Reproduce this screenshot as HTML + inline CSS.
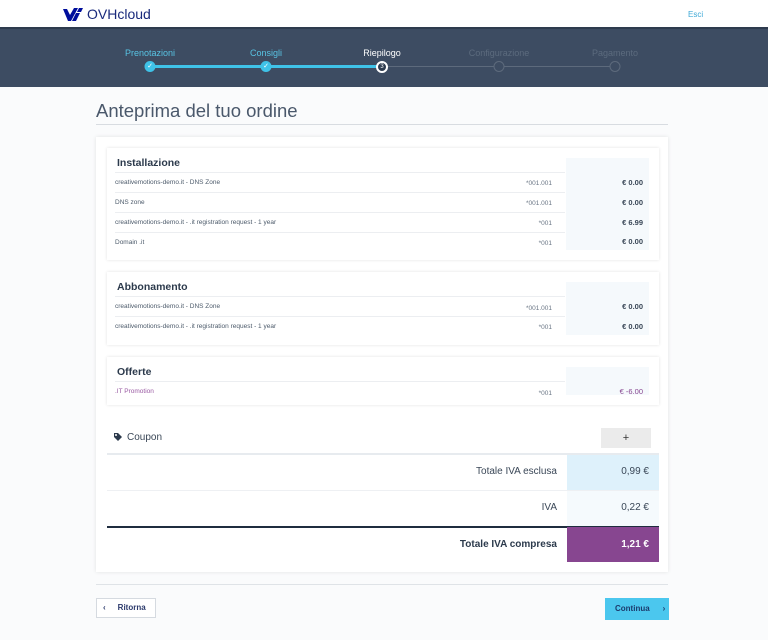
<!DOCTYPE html>
<html><head><meta charset="utf-8"><style>
*{margin:0;padding:0;box-sizing:border-box}
body{width:768px;height:640px;background:#fafbfc;font-family:"Liberation Sans",sans-serif;position:relative;overflow:hidden;color:#4d5b6b}
.a{position:absolute}
.step{position:absolute;top:48px;font-size:9px;color:#58c3e3;transform:translateX(-50%);white-space:nowrap}
.dot{position:absolute;top:61px;width:11px;height:11px;border-radius:50%;transform:translateX(-50%);border:2px solid #3fc2e8;background:#3fc2e8;color:#fff;font-size:7px;line-height:7px;text-align:center}
.sec{position:absolute;left:107px;width:552px;background:#fff;box-shadow:0 0 3px rgba(0,0,0,.12)}
.pc{position:absolute;right:10px;width:83px;top:10px;bottom:10px;background:#f5f9fc}
.h{position:absolute;left:10px;font-size:10.5px;font-weight:bold;color:#2c3a4c}
.row{position:absolute;left:8px;width:450px;height:20px;border-top:1px solid #eceef1;font-size:6.5px;color:#4d5b6b}
.row span{position:absolute;top:6px}
.q{position:absolute;right:107px;font-size:6.5px;color:#6a7685}
.p{position:absolute;right:16px;font-size:7.5px;font-weight:bold;color:#3a4757}
</style></head><body>
<div class="a" style="left:0;top:0;width:768px;height:27px;background:#fff"></div>
<svg class="a" style="left:63px;top:8px" width="21" height="14" viewBox="0 0 21 14"><path d="M0 1h4l3 6 4-7h4l-7 13H5z M13 5h4l-4 8H9z M16 0h4l-2 4h-4z" fill="#000e9c"/></svg>
<div class="a" style="left:87px;top:6px;font-size:14px;color:#1a2a7c">OVHcloud</div>
<div class="a" style="left:688px;top:10px;font-size:8px;color:#3fa9d6">Esci</div>
<div class="a" style="left:0;top:27px;width:768px;height:60px;background:#3d4c62;border-top:2px solid #2e3b4e"></div>
<div class="a" style="left:150px;top:65px;width:232px;height:3px;background:#3fc2e8"></div>
<div class="a" style="left:382px;top:66px;width:233px;height:1px;background:#5d6a7c"></div>
<div class="step" style="left:150px">Prenotazioni</div>
<div class="step" style="left:266px">Consigli</div>
<div class="step" style="left:382px;color:#fff">Riepilogo</div>
<div class="step" style="left:499px;color:#5c6b7e">Configurazione</div>
<div class="step" style="left:615px;color:#5c6b7e">Pagamento</div>
<div class="dot" style="left:150px">✓</div><div class="dot" style="left:266px">✓</div>
<div class="dot" style="left:382px;background:#2e3b4e;border-color:#fff;width:12px;height:12px;font-size:6px;line-height:8px">3</div>
<div class="dot" style="left:499px;background:#3d4c62;border-color:#5d6a7c;border-width:1px"></div>
<div class="dot" style="left:615px;background:#3d4c62;border-color:#5d6a7c;border-width:1px"></div>
<div class="a" style="left:96px;top:100px;font-size:18.5px;color:#4a586b">Anteprima del tuo ordine</div>
<div class="a" style="left:96px;top:124px;width:572px;height:1px;background:#d8dce1"></div>
<div class="a" style="left:96px;top:137px;width:572px;height:435px;background:#fff;box-shadow:0 0 4px rgba(0,0,0,.1)"></div>

<div class="sec" style="top:148px;height:112px"><div class="pc"></div>
<div class="h" style="top:9px">Installazione</div>
<div class="row" style="top:24px"><span>creativemotions-demo.it - DNS Zone</span></div><div class="q" style="top:32px">*001.001</div><div class="p" style="top:30px">€ 0.00</div>
<div class="row" style="top:44px"><span>DNS zone</span></div><div class="q" style="top:52px">*001.001</div><div class="p" style="top:50px">€ 0.00</div>
<div class="row" style="top:64px"><span>creativemotions-demo.it - .it registration request - 1 year</span></div><div class="q" style="top:72px">*001</div><div class="p" style="top:70px">€ 6.99</div>
<div class="row" style="top:84px"><span>Domain .it</span></div><div class="q" style="top:92px">*001</div><div class="p" style="top:89px">€ 0.00</div>
</div>
<div class="sec" style="top:272px;height:73px"><div class="pc"></div>
<div class="h" style="top:9px">Abbonamento</div>
<div class="row" style="top:24px"><span>creativemotions-demo.it - DNS Zone</span></div><div class="q" style="top:33px">*001.001</div><div class="p" style="top:30px">€ 0.00</div>
<div class="row" style="top:44px"><span>creativemotions-demo.it - .it registration request - 1 year</span></div><div class="q" style="top:52px">*001</div><div class="p" style="top:50px">€ 0.00</div>
</div>
<div class="sec" style="top:357px;height:48px"><div class="pc"></div>
<div class="h" style="top:9px">Offerte</div>
<div class="row" style="top:24px"><span style="color:#9a5aa3">.IT Promotion</span></div><div class="q" style="top:33px">*001</div><div class="p" style="top:30px;color:#874690;font-weight:normal">€ -6.00</div>
</div>

<svg class="a" style="left:113px;top:432px" width="10" height="10" viewBox="0 0 10 10"><path d="M1 1h4l4 4-4 4-4-4z" fill="#2c3a4c"/><circle cx="3" cy="3" r="1" fill="#fff"/></svg>
<div class="a" style="left:127px;top:432px;font-size:10px;color:#3a4757">Coupon</div>
<div class="a" style="left:601px;top:428px;width:50px;height:20px;background:#ebebeb;text-align:center;font-size:11px;line-height:20px;color:#333">+</div>
<div class="a" style="left:107px;top:453px;width:552px;height:2px;background:#e7ebef"></div>
<div class="a" style="left:567px;top:455px;width:92px;height:35px;background:#def1fb"></div>
<div class="a" style="left:107px;top:490px;width:552px;height:1px;background:#eef0f3"></div>
<div class="a" style="left:567px;top:491px;width:92px;height:35px;background:#f5fafd"></div>
<div class="a" style="left:107px;top:526px;width:552px;height:1.5px;background:#1f2d3f"></div>
<div class="a" style="left:567px;top:527px;width:92px;height:35px;background:#874690"></div>
<div class="a" style="right:211px;top:466px;font-size:10px;color:#3a4757">Totale IVA esclusa</div>
<div class="a" style="right:119px;top:466px;font-size:10px;color:#3a4757">0,99 €</div>
<div class="a" style="right:211px;top:502px;font-size:10px;color:#3a4757">IVA</div>
<div class="a" style="right:119px;top:502px;font-size:10px;color:#3a4757">0,22 €</div>
<div class="a" style="right:211px;top:539px;font-size:10px;font-weight:bold;color:#2c3a4c">Totale IVA compresa</div>
<div class="a" style="right:119px;top:539px;font-size:10px;font-weight:bold;color:#fff">1,21 €</div>

<div class="a" style="left:96px;top:584px;width:572px;height:1px;background:#dfe3e7"></div>
<div class="a" style="left:96px;top:598px;width:60px;height:20px;background:#fff;border:1px solid #d5dae0;font-size:8px;font-weight:bold;color:#2c3a6c;line-height:18px"><span style="margin-left:6px">‹</span><span style="margin-left:12px">Ritorna</span></div>
<div class="a" style="left:605px;top:598px;width:64px;height:22px;background:#4bc7ee;font-size:8px;font-weight:bold;color:#1c3a6c;line-height:22px"><span style="margin-left:10px">Continua</span><span style="margin-left:13px">›</span></div>
</body></html>
